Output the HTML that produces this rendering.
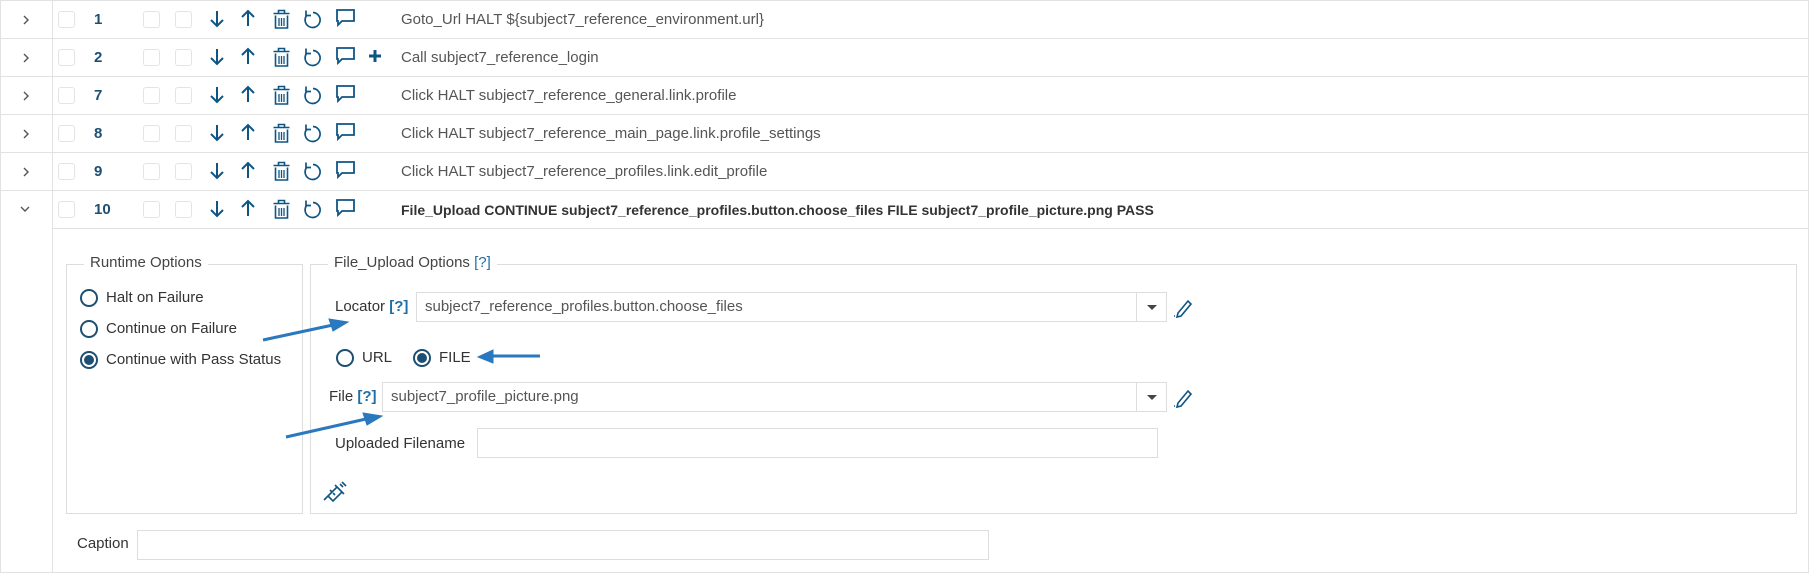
<!DOCTYPE html>
<html><head><meta charset="utf-8"><style>
*{box-sizing:border-box;margin:0;padding:0}
body{width:1809px;height:573px;background:#fff;font-family:"Liberation Sans",sans-serif;color:#444;position:relative;overflow:hidden}
.a{position:absolute}
.hl{position:absolute;left:0;width:1809px;height:1px;background:#e2e2e2}
.cb{position:absolute;width:17px;height:17px;border:1px solid #e4e4e4;border-radius:3px}
.num{position:absolute;font-size:15px;font-weight:bold;color:#1d4f73}
.txt{position:absolute;left:401px;font-size:15px;color:#555;white-space:nowrap}
.fs{position:absolute;border:1px solid #ddd}
.lg{position:absolute;background:#fff;padding:0 6px;font-size:15px;color:#444;top:-11px}
.rad{position:absolute;width:18px;height:18px;border:2px solid #1d4f73;border-radius:50%}
.rad.on::after{content:"";position:absolute;left:2px;top:2px;width:10px;height:10px;border-radius:50%;background:#1d4f73}
.lb{position:absolute;font-size:15px;color:#333;white-space:nowrap}
.q{color:#1d6fa5;font-weight:bold}
.inp{position:absolute;border:1px solid #ddd;font-size:15px;color:#555;padding-left:8px;white-space:nowrap}
.dd{position:absolute;right:0;top:0;bottom:0;width:30px;border-left:1px solid #ddd}
.dd::after{content:"";position:absolute;left:10px;top:12px;border-left:5px solid transparent;border-right:5px solid transparent;border-top:5px solid #444}
</style></head><body>
<div class="a" style="left:0;top:0;width:1px;height:573px;background:#e2e2e2"></div>
<div class="a" style="right:0;top:0;width:1px;height:573px;background:#e2e2e2"></div>
<div class="a" style="left:52px;top:0;width:1px;height:573px;background:#e2e2e2"></div>
<div class="hl" style="top:0"></div>
<div class="hl" style="top:38px"></div>
<div class="hl" style="top:76px"></div>
<div class="hl" style="top:114px"></div>
<div class="hl" style="top:152px"></div>
<div class="hl" style="top:190px"></div>
<div class="hl" style="top:228px;left:52px"></div>
<div class="hl" style="top:572px"></div>

<svg class="a" style="left:0;top:0" width="420" height="230">
<defs>
<g id="icons" fill="none" stroke="#0f5584">
<path stroke-width="2" d="M217 10v15M211 19l6 6 6-6"/>
<path stroke-width="2" d="M248 25V10M242 16l6-6 6 6"/>
<path stroke-width="1.6" d="M273.5 12.5h16M278.5 12.5v-3h6v3M275.5 14.5v12.5h12V14.5"/>
<path stroke-width="1.3" d="M279 17v8M281.5 17v8M284 17v8"/>
<path stroke-width="1.7" d="M313 11.5A7.5 7.5 0 1 1 307 14"/>
<path stroke-width="1.7" d="M306 9.5v5h5"/>
<path stroke-width="1.8" d="M337 9h17v11h-12l-4 4v-4h-1z"/>
</g>
</defs>
<g stroke="#555" stroke-width="1.4" fill="none">
<path d="M24 16l4 4-4 4"/><path d="M24 54l4 4-4 4"/><path d="M24 92l4 4-4 4"/><path d="M24 130l4 4-4 4"/><path d="M24 168l4 4-4 4"/><path d="M21 207l4 4 4-4"/>
</g>
<use href="#icons" y="1"/><use href="#icons" y="39"/><use href="#icons" y="77"/><use href="#icons" y="115"/><use href="#icons" y="153"/><use href="#icons" y="191"/>
<path d="M375 50v12M369 56h12" stroke="#0f5584" stroke-width="3"/>
</svg>

<div class="cb" style="left:58px;top:11px"></div><div class="cb" style="left:143px;top:11px"></div><div class="cb" style="left:175px;top:11px"></div>
<div class="cb" style="left:58px;top:49px"></div><div class="cb" style="left:143px;top:49px"></div><div class="cb" style="left:175px;top:49px"></div>
<div class="cb" style="left:58px;top:87px"></div><div class="cb" style="left:143px;top:87px"></div><div class="cb" style="left:175px;top:87px"></div>
<div class="cb" style="left:58px;top:125px"></div><div class="cb" style="left:143px;top:125px"></div><div class="cb" style="left:175px;top:125px"></div>
<div class="cb" style="left:58px;top:163px"></div><div class="cb" style="left:143px;top:163px"></div><div class="cb" style="left:175px;top:163px"></div>
<div class="cb" style="left:58px;top:201px"></div><div class="cb" style="left:143px;top:201px"></div><div class="cb" style="left:175px;top:201px"></div>

<div class="num" style="left:94px;top:11px">1</div>
<div class="num" style="left:94px;top:49px">2</div>
<div class="num" style="left:94px;top:87px">7</div>
<div class="num" style="left:94px;top:125px">8</div>
<div class="num" style="left:94px;top:163px">9</div>
<div class="num" style="left:94px;top:201px">10</div>

<div class="txt" style="top:11px">Goto_Url HALT ${subject7_reference_environment.url}</div>
<div class="txt" style="top:49px">Call subject7_reference_login</div>
<div class="txt" style="top:87px">Click HALT subject7_reference_general.link.profile</div>
<div class="txt" style="top:125px">Click HALT subject7_reference_main_page.link.profile_settings</div>
<div class="txt" style="top:163px">Click HALT subject7_reference_profiles.link.edit_profile</div>
<div class="txt" style="top:202px;font-weight:bold;color:#333;font-size:14px">File_Upload CONTINUE subject7_reference_profiles.button.choose_files FILE subject7_profile_picture.png PASS</div>

<div class="fs" style="left:66px;top:264px;width:237px;height:250px"><div class="lg" style="left:17px">Runtime Options</div></div>
<div class="fs" style="left:310px;top:264px;width:1487px;height:250px"><div class="lg" style="left:17px">File_Upload Options <span class="q" style="font-weight:normal">[?]</span></div></div>

<div class="rad" style="left:80px;top:289px"></div><div class="lb" style="left:106px;top:289px">Halt on Failure</div>
<div class="rad" style="left:80px;top:320px"></div><div class="lb" style="left:106px;top:320px">Continue on Failure</div>
<div class="rad on" style="left:80px;top:351px"></div><div class="lb" style="left:106px;top:351px">Continue with Pass Status</div>

<div class="lb" style="left:335px;top:298px">Locator <span class="q">[?]</span></div>
<div class="inp" style="left:416px;top:292px;width:751px;height:30px;line-height:28px">subject7_reference_profiles.button.choose_files<div class="dd"></div></div>
<div class="rad" style="left:336px;top:349px"></div><div class="lb" style="left:362px;top:349px">URL</div>
<div class="rad on" style="left:413px;top:349px"></div><div class="lb" style="left:439px;top:349px">FILE</div>
<div class="lb" style="left:329px;top:388px">File <span class="q">[?]</span></div>
<div class="inp" style="left:382px;top:382px;width:785px;height:30px;line-height:28px">subject7_profile_picture.png<div class="dd"></div></div>
<div class="lb" style="left:335px;top:435px">Uploaded Filename</div>
<div class="inp" style="left:477px;top:428px;width:681px;height:30px"></div>
<div class="lb" style="left:77px;top:535px">Caption</div>
<div class="inp" style="left:137px;top:530px;width:852px;height:30px"></div>

<svg class="a" style="left:0;top:0" width="1809" height="573">
<g fill="none" stroke="#0f5584" stroke-width="1.6">
<path d="M1178 313l10-12 3 3-10 12-4 1z"/><path d="M1174 316h1"/>
<path d="M1178 403l10-12 3 3-10 12-4 1z"/><path d="M1174 406h1"/>
<path d="M324 500l6-6M328 496l9-9 5 5-9 9zM335 485l9 9M340 484l3 3M342 482l4 4M330 490l2 2M333 493l2 2"/>
</g>
<g stroke="#2a78bd" stroke-width="3" fill="#2a78bd">
<path d="M263 340l70-15"/><path d="M348 322l-19-3 4 12z" stroke-width="1"/>
<path d="M540 356h-48"/><path d="M478 357l15-7v13z" stroke-width="1"/>
<path d="M286 437l80-18"/><path d="M382 416l-19-3 4 12z" stroke-width="1"/>
</g>
</svg>
</body></html>
